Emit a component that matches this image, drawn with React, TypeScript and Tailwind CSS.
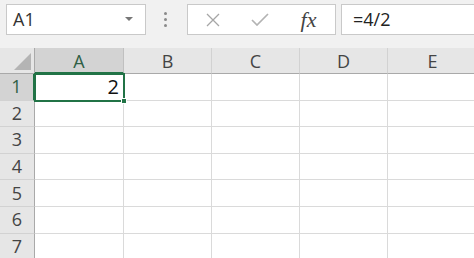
import { ReactNode } from "react";

const COLS = ["A", "B", "C", "D", "E"];
const COL_W = ["w-[89px]", "w-[88px]", "w-[88px]", "w-[88px]", "w-[90px]"];
const ROWS = [1, 2, 3, 4, 5, 6, 7];

function Toolbar() {
  return (
    <div className="flex h-[48px] items-start bg-[#f1f1f1] pt-[4px]">
      {/* name box */}
      <div className="ml-[6px] flex h-[31px] w-[140px] items-center justify-between border border-[#c9c9c9] bg-white pl-[6px] pr-[12px]">
        <span className="text-[18px] text-[#333]">A1</span>
        <svg width="8" height="5" viewBox="0 0 8 5">
          <path d="M0 0 H8 L4 4 Z" fill="#777" />
        </svg>
      </div>
      {/* grip */}
      <div className="flex h-[31px] w-[41px] flex-col items-center justify-center gap-[3px] pr-[3px]">
        <span className="h-[3px] w-[3px] rounded-full bg-[#8a8a8a]" />
        <span className="h-[3px] w-[3px] rounded-full bg-[#8a8a8a]" />
        <span className="h-[3px] w-[3px] rounded-full bg-[#8a8a8a]" />
      </div>
      {/* cancel / enter / fx */}
      <div className="flex h-[31px] w-[149px] items-center border border-[#c9c9c9] bg-white">
        <div className="flex w-[48px] justify-center pl-[2px]">
          <svg width="14" height="14" viewBox="0 0 14 14">
            <path d="M1 1 L13 13 M13 1 L1 13" stroke="#a6a6a6" strokeWidth="1.3" />
          </svg>
        </div>
        <div className="flex w-[48px] justify-center">
          <svg width="18" height="13" viewBox="0 0 18 13">
            <path d="M1 7 L6 12 L17 1" stroke="#b3b3b3" strokeWidth="1.7" fill="none" />
          </svg>
        </div>
        <div className="flex flex-1 justify-center pr-[2px]">
          <span className="font-['Liberation_Serif',serif] text-[22px] italic leading-none text-[#444]">fx</span>
        </div>
      </div>
      {/* formula input */}
      <div className="ml-[5px] flex h-[31px] flex-1 items-center border border-r-0 border-[#c9c9c9] bg-white pl-[11px]">
        <span className="text-[18px] text-[#222]">=4/2</span>
      </div>
    </div>
  );
}

function HeaderCell({ children, w, active }: { children: ReactNode; w: string; active?: boolean }) {
  return (
    <div
      className={`${w} flex h-[26px] shrink-0 items-center justify-center border-r pt-[2px] text-[18px] ${
        active
          ? "border-r-[#c0c0c0] border-b-2 border-b-[#217346] bg-[#d3d3d3] text-[#2f5f45]"
          : "border-r-[#d2d2d2] border-b border-b-[#a9a9a9] bg-[#e6e6e6] text-[#444]"
      }`}
    >
      {children}
    </div>
  );
}

export default function App() {
  return (
    <div className="h-[258px] w-[474px] overflow-hidden bg-white font-['Open_Sans','Noto_Sans',sans-serif]">
      <Toolbar />
      <div className="relative">
        {/* column headers */}
        <div className="flex">
          <div className="flex h-[26px] w-[35px] shrink-0 items-end justify-end border-r border-b border-[#a9a9a9] bg-[#e6e6e6] pr-[3px] pb-[3px]">
            <svg width="17" height="17" viewBox="0 0 17 17">
              <path d="M17 0 V17 H0 Z" fill="#b4b4b4" />
            </svg>
          </div>
          {COLS.map((c, i) => (
            <HeaderCell key={c} w={COL_W[i]} active={i === 0}>
              {c}
            </HeaderCell>
          ))}
        </div>
        {/* rows */}
        {ROWS.map((r) => (
          <div key={r} className="flex h-[26.6px]">
            <div
              className={`flex w-[35px] shrink-0 items-center justify-center border-b border-b-[#d2d2d2] text-[18px] ${
                r === 1
                  ? "border-r-2 border-r-[#217346] bg-[#d3d3d3] text-[#2f5f45]"
                  : "border-r border-r-[#a9a9a9] bg-[#e6e6e6] text-[#444]"
              }`}
            >
              {r}
            </div>
            {COLS.map((c, i) => (
              <div
                key={c}
                className={`${COL_W[i]} flex shrink-0 items-center justify-end border-r border-b border-[#dadada] pr-[4px] text-[20px] text-[#111]`}
              >
                {r === 1 && i === 0 ? "2" : ""}
              </div>
            ))}
          </div>
        ))}
        {/* selection border on A1 */}
        <div className="pointer-events-none absolute left-[34px] top-[25px] h-[29px] w-[91px] border-2 border-[#217346]">
          <div className="absolute -bottom-[4px] -right-[4px] h-[6px] w-[6px] border border-white bg-[#217346]" />
        </div>
      </div>
    </div>
  );
}
